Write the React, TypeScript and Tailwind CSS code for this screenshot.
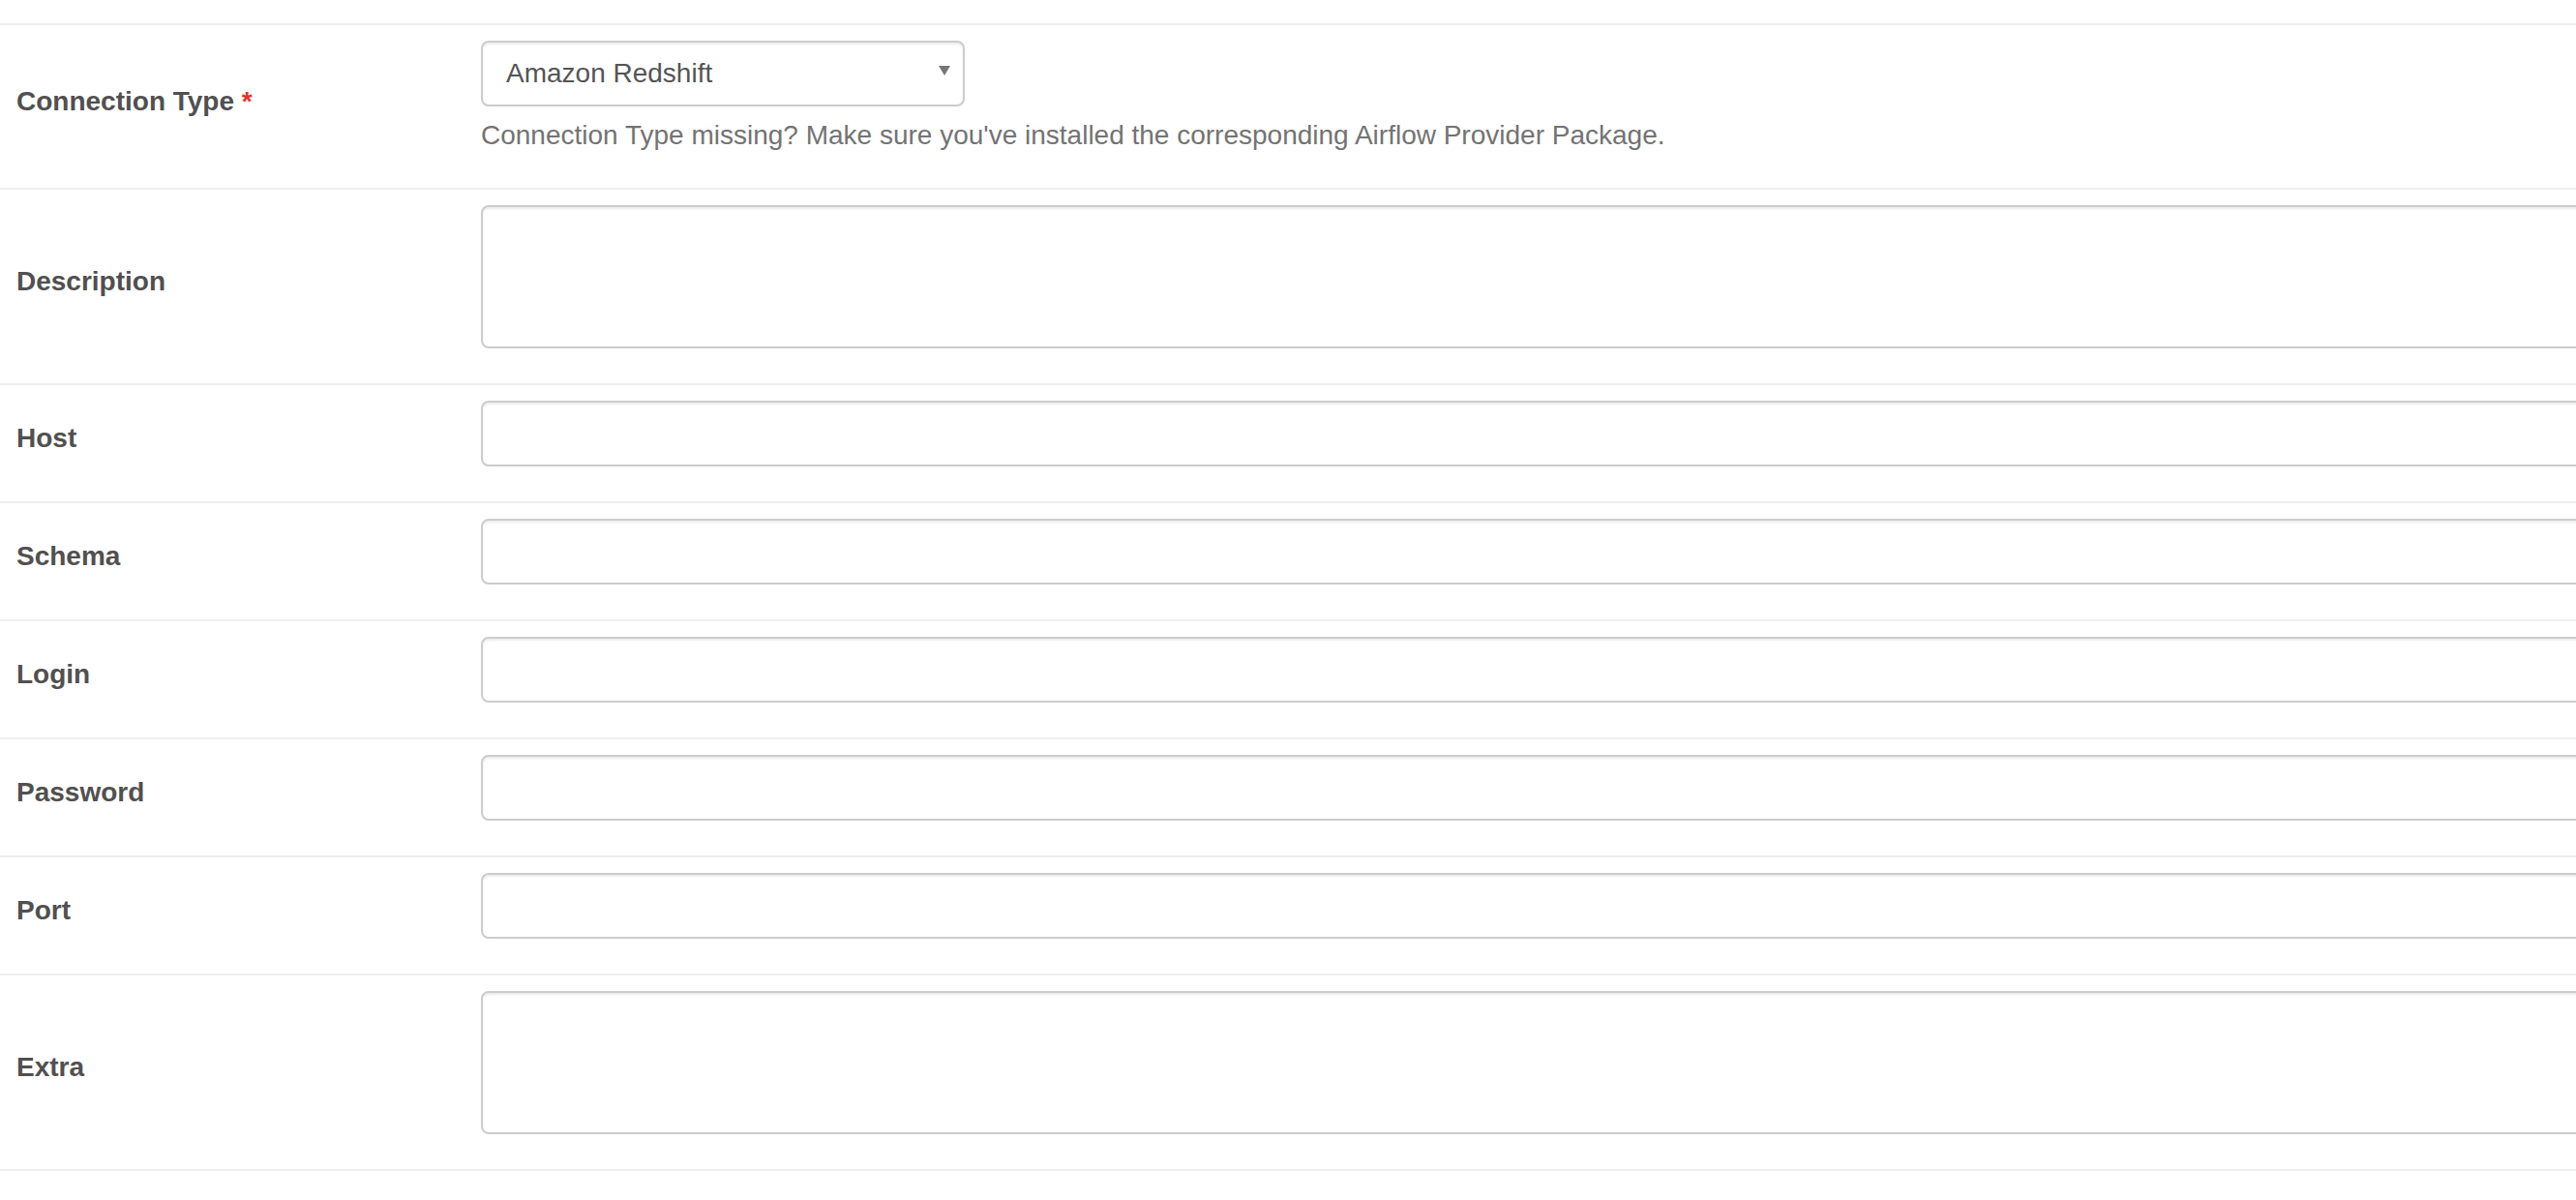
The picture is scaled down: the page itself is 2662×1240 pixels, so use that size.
import React from "react";

const inputCls =
  "box-border w-[2400px] border-2 border-[#cccccc] rounded-[8px] bg-white shadow-[inset_0_2px_2px_rgba(0,0,0,0.075)]";

function Label({ text, required }: { text: string; required?: boolean }) {
  return (
    <div className="w-[481px] shrink-0 flex items-center pl-[17px]">
      <span className="mb-[10px] text-[28px] font-bold leading-[40px] text-[#51504f]">
        {text}
        {required && <span className="text-[#e8322b]"> *</span>}
      </span>
    </div>
  );
}

function Row({
  label,
  required,
  children,
}: {
  label: string;
  required?: boolean;
  children: React.ReactNode;
}) {
  return (
    <div className="flex border-t-2 border-[#eeeeee]">
      <Label text={label} required={required} />
      <div className="flex-1 pl-[16px] pt-[16px] pb-[36px]">{children}</div>
    </div>
  );
}

export default function App() {
  const singles = ["Host", "Schema", "Login", "Password", "Port"];
  return (
    <div className="w-[2662px] h-[1240px] overflow-hidden bg-white font-['Liberation_Sans',Arial,sans-serif]">
      <div className="w-[3000px]">
        <div className="h-[24px]" />
        <div className="flex border-t-2 border-[#eeeeee]">
          <Label text="Connection Type" required />
          <div className="flex-1 pl-[16px] pt-[16px] pb-[16px]">
            <div className="box-border flex h-[68px] w-[500px] items-center justify-between rounded-[8px] border-2 border-[#cccccc] bg-white pl-[24px] pr-[12px] shadow-[inset_0_2px_2px_rgba(0,0,0,0.075)]">
              <span className="text-[28px] text-[#555555]">Amazon Redshift</span>
              <svg width="14" height="10" viewBox="0 0 14 10" className="mb-[6px]">
                <polygon points="1,0 13,0 7,10" fill="#777777" />
              </svg>
            </div>
            <div className="mt-[10px] mb-[18px] text-[28px] leading-[40px] text-[#737373]">
              Connection Type missing? Make sure you've installed the corresponding Airflow Provider Package.
            </div>
          </div>
        </div>
        <Row label="Description">
          <div className={inputCls + " h-[148px]"} />
        </Row>
        {singles.map((s) => (
          <Row key={s} label={s}>
            <div className={inputCls + " h-[68px]"} />
          </Row>
        ))}
        <Row label="Extra">
          <div className={inputCls + " h-[148px]"} />
        </Row>
        <div className="h-[40px] border-t-2 border-[#eeeeee]" />
      </div>
    </div>
  );
}
